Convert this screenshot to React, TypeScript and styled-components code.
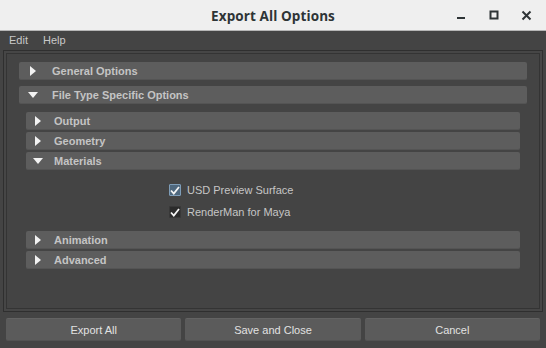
import React from "react";
import styled, { createGlobalStyle } from "styled-components";

const GlobalStyle = createGlobalStyle`
  html, body { margin: 0; padding: 0; background: #444444; }
  * { box-sizing: border-box; }
`;

const Window = styled.div`
  width: 546px;
  height: 348px;
  display: flex;
  flex-direction: column;
  background: #444444;
  font-family: "Liberation Sans", Arial, sans-serif;
  overflow: hidden;
`;

const TitleBar = styled.div`
  height: 31px;
  flex: none;
  display: grid;
  grid-template-columns: 1fr auto 1fr;
  align-items: center;
  background: #efefef;
  border-bottom: 1px solid #b6b6b6;
`;

const Title = styled.div`
  grid-column: 2;
  font-family: "Open Sans", "Noto Sans", sans-serif;
  font-weight: 700;
  font-size: 13.5px;
  color: #2e3436;
  letter-spacing: 0.1px;
  padding-top: 1px;
`;

const Controls = styled.div`
  grid-column: 3;
  justify-self: end;
  display: flex;
  align-items: center;
  padding-right: 3px;
`;

const CtrlButton = styled.div`
  width: 33px;
  height: 24px;
  display: flex;
  align-items: center;
  justify-content: center;
  color: #2e3436;
`;

const MenuBar = styled.div`
  height: 18px;
  flex: none;
  display: flex;
  align-items: center;
  gap: 15px;
  padding-left: 9px;
  font-size: 11px;
  color: #c8c8c8;
`;

const Frame = styled.div`
  height: 262px;
  flex: none;
  margin: 1px 3px 0 3px;
  border: 1px solid #2f2f2f;
  box-shadow: inset 0 0 0 2px #464646, inset 0 0 0 3px #343434;
  padding: 11px 15px 0 15px;
  display: flex;
  flex-direction: column;
  gap: 6px;
`;

const Section = styled.div`
  display: flex;
  flex-direction: column;
`;

const Header = styled.div<{ $indent: number; $gap: number }>`
  height: 18px;
  display: flex;
  align-items: center;
  background: #5d5d5d;
  border-radius: 2px;
  border-bottom: 1px solid #545454;
  padding-left: ${(p) => p.$indent}px;
  gap: ${(p) => p.$gap}px;
  font-size: 11px;
  font-weight: 700;
  color: #c4c4c4;
`;

const Arrow = styled.span`
  width: 16px;
  height: 18px;
  display: flex;
  align-items: center;
  justify-content: center;
  flex: none;
`;

const SubList = styled.div`
  padding: 8px 7px 0 7px;
  display: flex;
  flex-direction: column;
  gap: 2px;
`;

const Content = styled.div`
  padding: 9px 0 6px 143px;
  display: flex;
  flex-direction: column;
`;

const CheckRow = styled.label`
  height: 22px;
  display: flex;
  align-items: center;
  gap: 6px;
  font-size: 11px;
  color: #c6c6c6;
`;

const Box = styled.span<{ $focus: boolean }>`
  width: 12px;
  height: 12px;
  flex: none;
  display: flex;
  align-items: center;
  justify-content: center;
  background: ${(p) => (p.$focus ? "#4f687e" : "#2b2b2b")};
  border: 1px solid ${(p) => (p.$focus ? "#7e9db8" : "#383838")};
  border-radius: 1px;
`;

const ButtonBar = styled.div`
  flex: none;
  display: grid;
  grid-template-columns: 1fr 1fr 1fr;
  gap: 4px;
  padding: 6px 6px 7px 6px;
`;

const Button = styled.button`
  height: 23px;
  background: #5b5b5b;
  border: none;
  border-top: 1px solid #636363;
  border-bottom: 1px solid #525252;
  border-radius: 2px;
  color: #e2e2e2;
  font-family: "Liberation Sans", Arial, sans-serif;
  font-size: 11px;
  padding: 0;
`;

const RightTri = () => (
  <svg width="6" height="10" viewBox="0 0 6 10">
    <polygon points="0,0 6,5 0,10" fill="#f2f2f2" />
  </svg>
);

const DownTri = () => (
  <svg width="10" height="6" viewBox="0 0 10 6">
    <polygon points="0,0 10,0 5,6" fill="#f2f2f2" />
  </svg>
);

const Check = () => (
  <svg width="10" height="9" viewBox="0 0 10 9">
    <polyline points="1,4.5 3.8,7.5 9,1" fill="none" stroke="#f4f4f4" strokeWidth="1.8" />
  </svg>
);

type HProps = { label: string; open?: boolean; nested?: boolean };
const SectionHeader = ({ label, open, nested }: HProps) => (
  <Header $indent={nested ? 4 : 6} $gap={nested ? 8 : 11}>
    <Arrow>{open ? <DownTri /> : <RightTri />}</Arrow>
    {label}
  </Header>
);

export default function App() {
  return (
    <>
      <GlobalStyle />
      <Window>
        <TitleBar>
          <Title>Export All Options</Title>
          <Controls>
            <CtrlButton>
              <svg width="10" height="10" viewBox="0 0 10 10">
                <rect x="1" y="7" width="8" height="2" fill="#2e3436" />
              </svg>
            </CtrlButton>
            <CtrlButton>
              <svg width="10" height="10" viewBox="0 0 10 10">
                <rect x="1.5" y="1.5" width="7" height="7" fill="none" stroke="#2e3436" strokeWidth="2" />
              </svg>
            </CtrlButton>
            <CtrlButton>
              <svg width="11" height="11" viewBox="0 0 11 11">
                <path d="M1.5 1.5 L9.5 9.5 M9.5 1.5 L1.5 9.5" stroke="#2e3436" strokeWidth="2" />
              </svg>
            </CtrlButton>
          </Controls>
        </TitleBar>
        <MenuBar>
          <span>Edit</span>
          <span>Help</span>
        </MenuBar>
        <Frame>
          <SectionHeader label="General Options" />
          <Section>
            <SectionHeader label="File Type Specific Options" open />
            <SubList>
              <SectionHeader label="Output" nested />
              <SectionHeader label="Geometry" nested />
              <Section>
                <SectionHeader label="Materials" nested open />
                <Content>
                  <CheckRow>
                    <Box $focus>
                      <Check />
                    </Box>
                    USD Preview Surface
                  </CheckRow>
                  <CheckRow>
                    <Box $focus={false}>
                      <Check />
                    </Box>
                    RenderMan for Maya
                  </CheckRow>
                </Content>
              </Section>
              <SectionHeader label="Animation" nested />
              <SectionHeader label="Advanced" nested />
            </SubList>
          </Section>
        </Frame>
        <ButtonBar>
          <Button>Export All</Button>
          <Button>Save and Close</Button>
          <Button>Cancel</Button>
        </ButtonBar>
      </Window>
    </>
  );
}
